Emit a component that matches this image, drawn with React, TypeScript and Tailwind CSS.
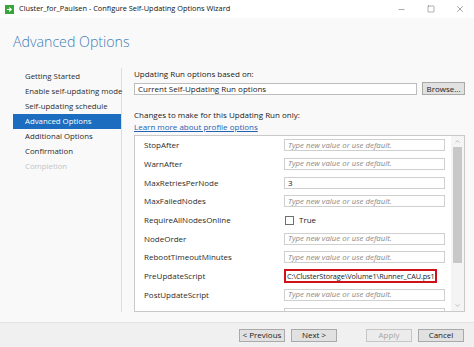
import { Minus, Square, X, ChevronUp, ChevronDown } from 'lucide-react';

const font = { fontFamily: '"Open Sans", "Noto Sans", sans-serif' };

const navItems = [
  'Getting Started',
  'Enable self-updating mode',
  'Self-updating schedule',
  'Advanced Options',
  'Additional Options',
  'Confirmation',
  'Completion',
];

type Row = { name: string; kind: 'empty' | 'value' | 'check' | 'script'; value?: string };

const rows: Row[] = [
  { name: 'StopAfter', kind: 'empty' },
  { name: 'WarnAfter', kind: 'empty' },
  { name: 'MaxRetriesPerNode', kind: 'value', value: '3' },
  { name: 'MaxFailedNodes', kind: 'empty' },
  { name: 'RequireAllNodesOnline', kind: 'check' },
  { name: 'NodeOrder', kind: 'empty' },
  { name: 'RebootTimeoutMinutes', kind: 'empty' },
  { name: 'PreUpdateScript', kind: 'script', value: 'C:\\ClusterStorage\\Volume1\\Runner_CAU.ps1' },
  { name: 'PostUpdateScript', kind: 'empty' },
  { name: 'ConfigurationName', kind: 'empty' },
];

const ValueCell = ({ row }: { row: Row }) => {
  if (row.kind === 'check') {
    return (
      <div className="flex items-center gap-[5px] pl-[1px]">
        <div className="w-[9px] h-[9px] border border-[#6f6f6f] bg-white" />
        <span className="text-[8px] text-[#222]">True</span>
      </div>
    );
  }
  if (row.kind === 'script') {
    return (
      <div className="w-[153px] h-[14px] border-2 border-[#d0111b] bg-white flex items-center px-[1px] overflow-hidden">
        <span className="text-[7.3px] tracking-[-0.1px] text-[#1a1a1a] whitespace-nowrap">{row.value}</span>
      </div>
    );
  }
  return (
    <div className="w-[161px] h-[12px] border border-[#cfcfcf] bg-white flex items-center px-[3px] overflow-hidden">
      {row.kind === 'value' ? (
        <span className="text-[8px] text-[#1a1a1a]">{row.value}</span>
      ) : (
        <span className="text-[7.8px] italic text-[#8a8a8a] whitespace-nowrap">Type new value or use default.</span>
      )}
    </div>
  );
};

const Btn = ({ label, disabled }: { label: string; disabled?: boolean }) => (
  <div
    className={
      'w-[46px] h-[13px] flex items-center justify-center text-[8px] border ' +
      (disabled
        ? 'border-[#c6c6c6] bg-[#ececec] text-[#a6a6a6]'
        : 'border-[#a9a9a9] bg-[#e1e1e1] text-[#1a1a1a]')
    }
  >
    {label}
  </div>
);

export default function App() {
  return (
    <div className="w-[474px] h-[347px] overflow-hidden flex flex-col bg-[#f9f9f9] text-[#1a1a1a]" style={font}>
      {/* title bar */}
      <div className="h-[18px] bg-white flex items-center pl-[5px] shrink-0">
        <div className="w-[9px] h-[9px] bg-[#3aa53a] flex items-center justify-center">
          <svg width="7" height="7" viewBox="0 0 7 7">
            <path d="M1 3.5h4M3.3 1.6l1.9 1.9-1.9 1.9" stroke="white" strokeWidth="1.2" fill="none" />
          </svg>
        </div>
        <span className="ml-[5px] text-[7.4px] text-[#111] whitespace-nowrap">
          Cluster_for_Paulsen - Configure Self-Updating Options Wizard
        </span>
        <div className="ml-auto flex items-center">
          <div className="w-[29px] flex justify-center"><Minus size={9} strokeWidth={1.2} color="#444" /></div>
          <div className="w-[29px] flex justify-center"><Square size={8} strokeWidth={1.3} color="#444" /></div>
          <div className="w-[29px] flex justify-center"><X size={10} strokeWidth={1.2} color="#444" /></div>
        </div>
      </div>

      {/* heading */}
      <div className="pl-[13px] pt-[13px] h-[50px] shrink-0">
        <h1 className="text-[14.2px] font-light text-[#3f7db5] leading-[22px]">Advanced Options</h1>
      </div>

      {/* body */}
      <div className="flex flex-1 min-h-0">
        <div className="w-[109px] ml-[13px] pt-[1px] border-r border-[#dedede] mb-[10px]">
          {navItems.map((item) => {
            const active = item === 'Advanced Options';
            const done = item === 'Completion';
            return (
              <div
                key={item}
                className={
                  'h-[15px] flex items-center pl-[12px] text-[7.8px] whitespace-nowrap ' +
                  (active ? 'bg-[#1c6cbf] text-white' : done ? 'text-[#c4c4c4]' : 'text-[#2b2b2b]')
                }
              >
                {item}
              </div>
            );
          })}
        </div>

        <div className="flex-1 pl-[12px] pr-[9px] flex flex-col">
          <div className="text-[8px] leading-[12px]">Updating Run options based on:</div>
          <div className="flex items-center mt-[2px]">
            <div className="w-[283px] h-[12px] border border-[#bdbdbd] bg-white flex items-center px-[3px] text-[8px]">
              Current Self-Updating Run options
            </div>
            <div className="ml-[5px] w-[43px] h-[13px] border border-[#a9a9a9] bg-[#e1e1e1] flex items-center justify-center text-[8px]">
              Browse...
            </div>
          </div>
          <div className="text-[8px] leading-[12px] mt-[14px]">Changes to make for this Updating Run only:</div>
          <div className="text-[8px] leading-[12px] text-[#2463b4] underline">Learn more about profile options</div>

          <div className="mt-[2px] w-[331px] h-[179px] border border-[#c9c9c9] bg-white flex overflow-hidden mb-[10px]">
            <div className="flex-1 pl-[9px] overflow-hidden">
              {rows.map((row) => (
                <div key={row.name} className="h-[18.7px] flex items-center">
                  <div className="w-[140px] text-[8px] text-[#2b2b2b] whitespace-nowrap">{row.name}</div>
                  <ValueCell row={row} />
                </div>
              ))}
            </div>
            <div className="w-[13px] flex flex-col items-center bg-[#f4f4f4]">
              <div className="h-[11px] flex items-center"><ChevronUp size={7} color="#9a9a9a" /></div>
              <div className="w-[9px] h-[116px] bg-[#c8c8c8]" />
              <div className="flex-1" />
              <div className="h-[11px] flex items-center"><ChevronDown size={7} color="#9a9a9a" /></div>
            </div>
          </div>
        </div>
      </div>

      {/* footer */}
      <div className="h-[25px] shrink-0 bg-[#f0f0f0] border-t border-[#e3e3e3] flex items-center justify-end pr-[10px] gap-[6px]">
        <Btn label="< Previous" />
        <Btn label="Next >" />
        <div className="w-[17px]" />
        <Btn label="Apply" disabled />
        <Btn label="Cancel" />
      </div>
    </div>
  );
}
